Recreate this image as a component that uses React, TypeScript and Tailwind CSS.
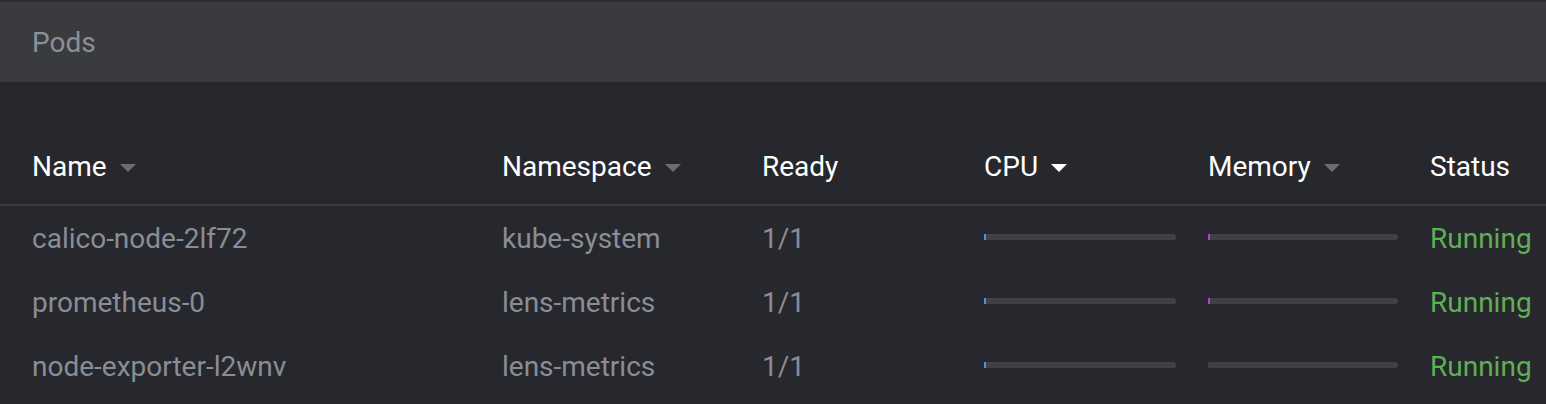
import React from "react";

const font = { fontFamily: "Roboto, 'Noto Sans', sans-serif" };

function Arrow({ active }: { active?: boolean }) {
  return (
    <svg width="16" height="8" viewBox="0 0 16 8" className="ml-[13px] mt-[2px]">
      <polygon points="0,0 16,0 8,8" fill={active ? "#ffffff" : "#6c6e73"} />
    </svg>
  );
}

function Bar({ color, value, width }: { color: string; value: number; width: number }) {
  return (
    <div className="h-[6px] mb-[4px] rounded-[3px] rounded-l-[1px] bg-[#404146] flex" style={{ width }}>
      {value > 0 && <div className="h-full" style={{ width: value, background: color }} />}
    </div>
  );
}

const rows = [
  { name: "calico-node-2lf72", ns: "kube-system", cpu: 2, mem: 2 },
  { name: "prometheus-0", ns: "lens-metrics", cpu: 2, mem: 2 },
  { name: "node-exporter-l2wnv", ns: "lens-metrics", cpu: 2, mem: 0 },
];

export default function App() {
  return (
    <div className="w-[1546px] h-[404px] overflow-hidden bg-[#26282d]" style={font}>
      <div className="h-[2px] bg-[#2b2c30]" />
      <div className="h-[80px] bg-[#3a3b3f] flex items-center pl-[32px] pt-[2px] text-[28px] text-[#8c9099]">
        Pods
      </div>
      <div className="h-[46px]" />
      <div className="flex items-center h-[78px] pl-[32px] pt-[2px] text-[28px] text-white border-b-2 border-[#3a3b3f]">
        <div className="w-[470px] flex items-center">Name<Arrow /></div>
        <div className="w-[260px] flex items-center">Namespace<Arrow /></div>
        <div className="w-[222px]">Ready</div>
        <div className="w-[224px] flex items-center">CPU<Arrow active /></div>
        <div className="w-[222px] flex items-center">Memory<Arrow /></div>
        <div>Status</div>
      </div>
      {rows.map((r) => (
        <div key={r.name} className="flex items-center h-[64px] pl-[32px] pt-[2px] text-[28px] text-[#8a8d95]">
          <div className="w-[470px]">{r.name}</div>
          <div className="w-[260px]">{r.ns}</div>
          <div className="w-[222px]">1/1</div>
          <div className="w-[224px]">
            <Bar color="#4a90e2" value={r.cpu} width={192} />
          </div>
          <div className="w-[222px]">
            <Bar color="#c23ad6" value={r.mem} width={190} />
          </div>
          <div className="text-[#5faf55] whitespace-nowrap">Running</div>
        </div>
      ))}
    </div>
  );
}
